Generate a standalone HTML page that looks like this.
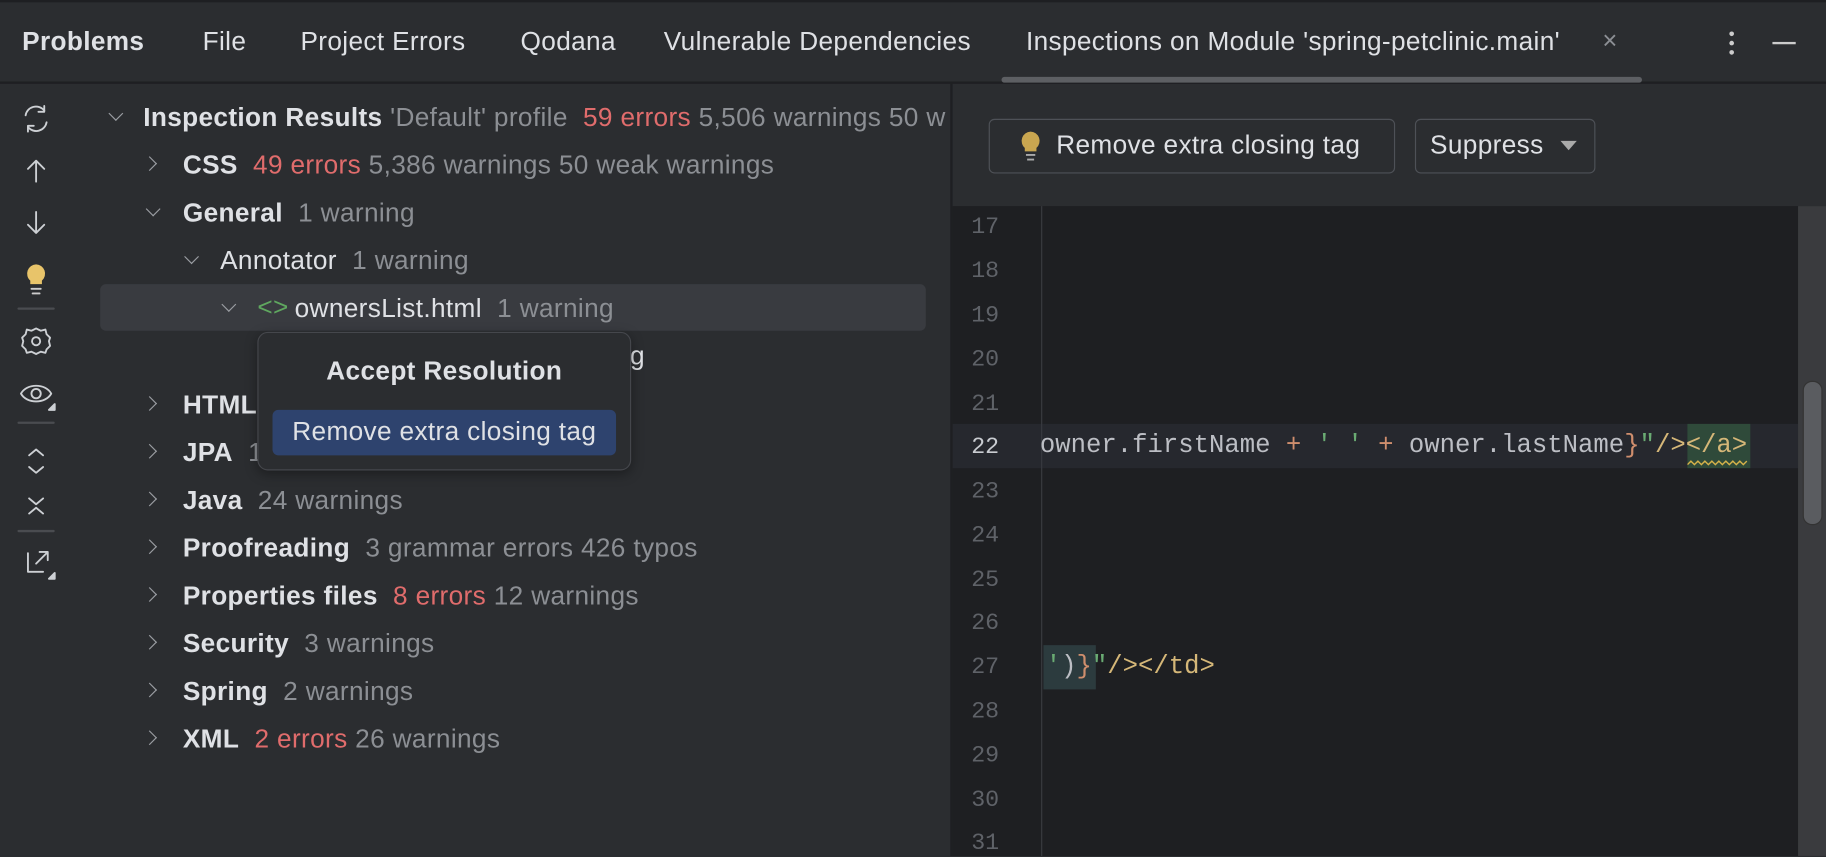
<!DOCTYPE html>
<html><head><meta charset="utf-8"><style>
html,body{margin:0;padding:0;background:#2b2d30;overflow:hidden;width:1826px;height:856px}
#w{position:absolute;left:0;top:0;width:1568px;height:735px;transform:scale(1.16454);transform-origin:0 0;background:#2b2d30;font-family:"Liberation Sans",sans-serif;color:#dfe1e5;font-size:22.5px;letter-spacing:0.3px}
.a{position:absolute;white-space:pre}
.b{font-weight:bold}
.g{color:#8c8f94}
.r{color:#e06c6c}
.ch{position:absolute;width:8px;height:8px;border-right:1.8px solid #9a9da2;border-bottom:1.8px solid #9a9da2}
.cr{transform:rotate(-45deg)}
.cd{transform:rotate(45deg)}
.mono{font-family:"Liberation Mono",monospace;font-size:22px;letter-spacing:0}
.ln{position:absolute;left:818px;width:40px;text-align:right;color:#5f6268;font-family:"Liberation Mono",monospace;font-size:20px;letter-spacing:0}
.t{top:0}
</style></head><body><div id="w">
<div class="a" style="left:0;top:0;width:1568px;height:2px;background:#1e1f22"></div>
<div class="a b" style="left:19px;top:23px">Problems</div>
<div class="a" style="left:174px;top:23px">File</div>
<div class="a" style="left:258px;top:23px">Project Errors</div>
<div class="a" style="left:447px;top:23px">Qodana</div>
<div class="a" style="left:570px;top:23px">Vulnerable Dependencies</div>
<div class="a" style="left:881px;top:23px">Inspections on Module 'spring-petclinic.main'</div>
<div class="a g" style="left:1376px;top:22px;font-size:22px">×</div>
<div class="a" style="left:1485px;top:27px;width:4px;height:4px;border-radius:2px;background:#ccc;box-shadow:0 8px 0 #ccc,0 16px 0 #ccc"></div>
<div class="a" style="left:1522px;top:36px;width:20px;height:2px;background:#ccc"></div>
<div class="a" style="left:0;top:70px;width:1568px;height:2px;background:#1e1f22"></div>
<div class="a" style="left:860px;top:66px;width:550px;height:5px;border-radius:3px;background:#5d5f63"></div>

<!-- left toolbar -->
<svg class="a" style="left:0;top:72px" width="60" height="460" fill="none" stroke="#cdd0d4" stroke-width="1.6" stroke-linecap="round" stroke-linejoin="round">
<path d="M22 27a9 9 0 0 1 16-4M40 33a9 9 0 0 1-16 4"/><path d="M38 19v5h-5M24 41v-5h5"/>
<path d="M31 84V66M24 73l7-7 7 7"/>
<path d="M31 110v18M24 121l7 7 7-7"/>
<path d="M31 155a8 8 0 0 0-5 14v3h10v-3a8 8 0 0 0-5-14z" fill="#e8c46a" stroke="none"/><path d="M27 176h8M28 180h6" stroke="#ccc"/>
<path d="M16 193h30" stroke="#4a4c50" stroke-width="2"/>
<circle cx="31" cy="221" r="3.5"/><path d="M31 210l4 2 4-1 1 4 3 3-1 3 1 4-3 3-1 3-4-1-4 2-4-2-4 1-1-3-3-3 1-4-1-3 3-3 1-4 4 1z"/>
<path d="M18 266c5-9 21-9 26 0c-5 9-21 9-26 0z"/><circle cx="31" cy="266" r="4"/><path d="M42 280l5-5v5z" fill="#cdd0d4"/>
<path d="M16 291h30" stroke="#4a4c50" stroke-width="2"/>
<path d="M25 319l6-5 6 5M25 329l6 5 6-5"/>
<path d="M25 356l6 5 6-5M25 369l6-5 6 5"/>
<path d="M16 384h30" stroke="#4a4c50" stroke-width="2"/>
<path d="M24 403v16h13M34 402h7v7M41 402l-10 10"/><path d="M42 425l5-5v5z" fill="#cdd0d4"/>
</svg>

<!-- tree -->
<div class="a" style="left:86px;top:244px;width:709px;height:40px;border-radius:5px;background:#393b40"></div>
<div class="ch cd" style="left:95px;top:93px"></div>
<div class="a" style="left:123px;top:88px"><span class="b">Inspection Results</span><span class="g"> 'Default' profile  </span><span class="r">59 errors</span><span class="g"> 5,506 warnings 50 w</span></div>
<div class="ch cr" style="left:124px;top:136px"></div>
<div class="a" style="left:157px;top:129px"><span class="b">CSS</span>  <span class="r">49 errors</span><span class="g"> 5,386 warnings 50 weak warnings</span></div>
<div class="ch cd" style="left:127px;top:175px"></div>
<div class="a" style="left:157px;top:170px"><span class="b">General</span><span class="g">  1 warning</span></div>
<div class="ch cd" style="left:160px;top:216px"></div>
<div class="a" style="left:189px;top:211px">Annotator<span class="g">  1 warning</span></div>
<div class="ch cd" style="left:192px;top:257px"></div>
<div class="a" style="left:221px;top:251px;color:#5fa75f">&lt;&gt;</div>
<div class="a" style="left:253px;top:252px">ownersList.html<span class="g">  1 warning</span></div>
<div class="a" style="left:541px;top:293px">g</div>
<div class="ch cr" style="left:124px;top:342px"></div><div class="a b" style="left:157px;top:335px">HTML</div>
<div class="ch cr" style="left:124px;top:383px"></div><div class="a b" style="left:157px;top:376px">JPA<span class="g" style="font-weight:normal">  1</span></div>
<div class="ch cr" style="left:124px;top:424px"></div><div class="a" style="left:157px;top:417px"><span class="b">Java</span><span class="g">  24 warnings</span></div>
<div class="ch cr" style="left:124px;top:465px"></div><div class="a" style="left:157px;top:458px"><span class="b">Proofreading</span><span class="g">  3 grammar errors 426 typos</span></div>
<div class="ch cr" style="left:124px;top:506px"></div><div class="a" style="left:157px;top:499px"><span class="b">Properties files</span>  <span class="r">8 errors</span><span class="g"> 12 warnings</span></div>
<div class="ch cr" style="left:124px;top:547px"></div><div class="a" style="left:157px;top:540px"><span class="b">Security</span><span class="g">  3 warnings</span></div>
<div class="ch cr" style="left:124px;top:588px"></div><div class="a" style="left:157px;top:581px"><span class="b">Spring</span><span class="g">  2 warnings</span></div>
<div class="ch cr" style="left:124px;top:629px"></div><div class="a" style="left:157px;top:622px"><span class="b">XML</span>  <span class="r">2 errors</span><span class="g"> 26 warnings</span></div>

<!-- popup -->
<div class="a" style="left:221px;top:285px;width:319px;height:117px;border:1px solid #45474c;border-radius:9px;background:#2b2d30;box-shadow:0 3px 10px rgba(0,0,0,.35)"></div>
<div class="a b" style="left:221px;top:306px;width:321px;text-align:center">Accept Resolution</div>
<div class="a" style="left:234px;top:352px;width:295px;height:39px;border-radius:5px;background:#2e436e"></div>
<div class="a" style="left:234px;top:358px;width:295px;text-align:center">Remove extra closing tag</div>

<!-- divider -->
<div class="a" style="left:816px;top:72px;width:2px;height:663px;background:#1e1f22"></div>

<!-- right header -->
<div class="a" style="left:849px;top:102px;width:347px;height:45px;border:1.5px solid #4e5157;border-radius:5px"></div>
<svg class="a" style="left:875px;top:112px" width="20" height="28"><path d="M10 1a8 8 0 0 0-5 14v3h10v-3a8 8 0 0 0-5-14z" fill="#c9a650"/><path d="M6 21h8M7 25h6" stroke="#aaa" stroke-width="1.6"/></svg>
<div class="a" style="left:907px;top:112px">Remove extra closing tag</div>
<div class="a" style="left:1215px;top:102px;width:153px;height:45px;border:1.5px solid #4e5157;border-radius:5px"></div>
<div class="a" style="left:1228px;top:112px">Suppress</div>
<div class="a" style="left:1340px;top:121px;width:0;height:0;border-left:7px solid transparent;border-right:7px solid transparent;border-top:8px solid #aaa"></div>

<!-- editor -->
<div class="a" style="left:818px;top:177px;width:750px;height:558px;background:#1e1f22"></div>
<div class="a" style="left:818px;top:364px;width:726px;height:38px;background:#26282e"></div>
<div class="a" style="left:894px;top:177px;width:1px;height:558px;background:#393b40"></div>
<div class="a" style="left:1544px;top:177px;width:24px;height:558px;background:#3a3b3e"></div>
<div class="a" style="left:1548px;top:327px;width:15px;height:122px;border-radius:8px;background:#5a5c60;border:1px solid #333"></div>
<div class="ln" style="top:184px">17</div><div class="ln" style="top:222px">18</div><div class="ln" style="top:260px">19</div><div class="ln" style="top:298px">20</div><div class="ln" style="top:336px">21</div><div class="ln" style="top:373px;color:#c9ccd1">22</div><div class="ln" style="top:411px">23</div><div class="ln" style="top:449px">24</div><div class="ln" style="top:487px">25</div><div class="ln" style="top:524px">26</div><div class="ln" style="top:562px">27</div><div class="ln" style="top:600px">28</div><div class="ln" style="top:638px">29</div><div class="ln" style="top:676px">30</div><div class="ln" style="top:713px">31</div>
<div class="a" style="left:1449px;top:364px;width:54px;height:38px;background:#2f4a3a"></div>
<div class="a mono" style="left:893px;top:370px;color:#bcbec4">owner.firstName <span style="color:#cf8e6d">+</span> <span style="color:#6aab73">' '</span> <span style="color:#cf8e6d">+</span> owner.lastName<span style="color:#cf8e6d">}</span><span style="color:#6aab73">"</span><span style="color:#d5b778">/&gt;&lt;/a&gt;</span></div>
<svg class="a" style="left:1449px;top:395px" width="54" height="6"><path d="M0 4l3-3 3 3 3-3 3 3 3-3 3 3 3-3 3 3 3-3 3 3 3-3 3 3 3-3 3 3 3-3 3 3 3-3" stroke="#d5b24a" fill="none" stroke-width="1.2"/></svg>
<div class="a" style="left:896px;top:554px;width:45px;height:38px;background:#2c3b3e"></div>
<div class="a mono" style="left:898px;top:560px;color:#bcbec4"><span style="color:#6aab73">'</span>)<span style="color:#cf8e6d">}</span><span style="color:#6aab73">"</span><span style="color:#d5b778">/&gt;&lt;/td&gt;</span></div>
</div></body></html>
